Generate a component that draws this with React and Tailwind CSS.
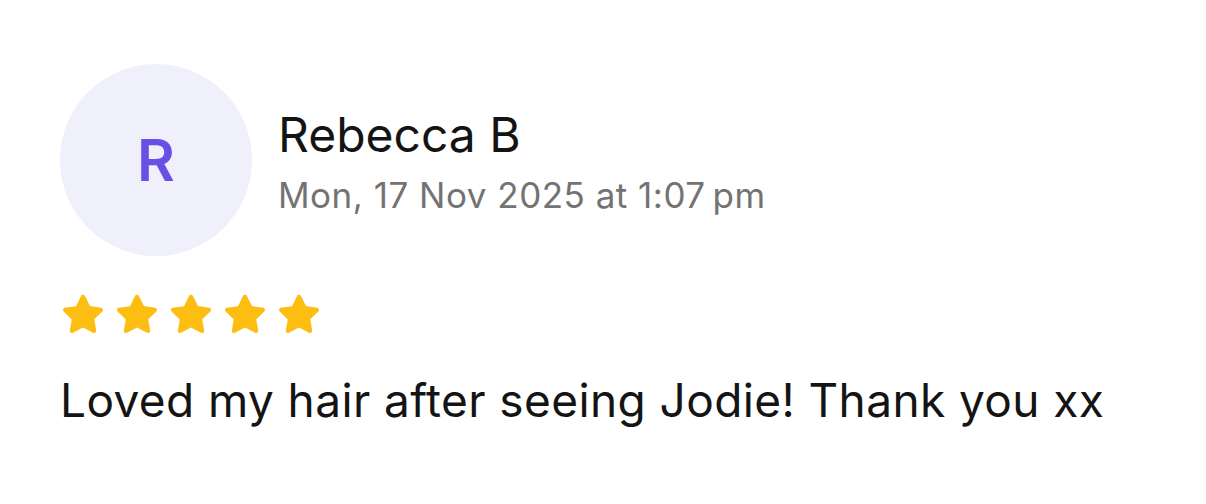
import React from "react";

const review = {
  name: "Rebecca B",
  date: "Mon, 17 Nov 2025 at 1:07\u202Fpm",
  rating: 5,
  text: "Loved my hair after seeing Jodie! Thank you xx",
};

function Star() {
  return (
    <svg viewBox="0 0 24 24" className="w-[52px] h-[52px]" fill="#FDBE12">
      <path
        d="M12 2.6c.4 0 .75.23.92.6l2.3 4.7 5.17.75c.82.12 1.15 1.13.55 1.7l-3.74 3.65.88 5.15c.14.82-.72 1.44-1.45 1.05L12 17.8l-4.63 2.43c-.73.39-1.590-.23-1.45-1.05l.88-5.15-3.74-3.65c-.6-.57-.27-1.58.55-1.7l5.17-.75 2.3-4.7c.17-.37.52-.6.92-.6z"
        strokeLinejoin="round"
      />
    </svg>
  );
}

export default function App() {
  return (
    <div
      className="w-[1206px] h-[504px] bg-white pl-[60px] pt-[64px]"
      style={{ fontFamily: "Inter, 'Noto Sans', sans-serif" }}
    >
      <div className="flex items-start gap-[26px]">
        <div className="w-[192px] h-[192px] rounded-full bg-[#f0effc] flex items-center justify-center">
          <span className="text-[58px] font-semibold text-[#6a4fe4] leading-none">R</span>
        </div>
        <div className="flex flex-col pt-[42px]">
          <span className="text-[48px] leading-[58px] text-[#141414]">{review.name}</span>
          <span className="mt-[9px] text-[35px] leading-[44px] text-[#737373] tracking-[0.5px]">
            {review.date}
          </span>
        </div>
      </div>

      <div className="flex gap-[2px] mt-[33px] ml-[-3px]">
        {Array.from({ length: review.rating }).map((_, i) => (
          <Star key={i} />
        ))}
      </div>

      <p className="mt-[31px] text-[46px] leading-[56px] text-[#141414] tracking-[0.4px]">
        {review.text}
      </p>
    </div>
  );
}
